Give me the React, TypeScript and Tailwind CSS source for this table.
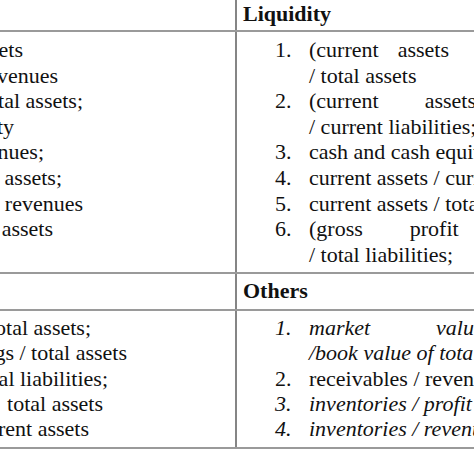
import React from 'react';

type ItemProps = {
  num: string;
  italicNum?: boolean;
  children: React.ReactNode;
};

// one numbered entry of a ratio list
function Item({ num, italicNum, children }: ItemProps) {
  return (
    <div className="flex whitespace-nowrap">
      <span className={`w-[34px] shrink-0 ${italicNum ? 'italic' : ''}`}>{num}</span>
      <span className="flex whitespace-nowrap">{children}</span>
    </div>
  );
}

function Cont({ children, italic }: { children: React.ReactNode; italic?: boolean }) {
  return (
    <div className={`pl-[34px] whitespace-nowrap ${italic ? 'italic' : ''}`}>{children}</div>
  );
}

// left column lines are cut by the page edge, so each one is pinned by its right end
function Cut({ end, text }: { end: number; text: string }) {
  return (
    <div className="flex justify-end whitespace-nowrap" style={{ width: end }}>
      <span>{text}</span>
    </div>
  );
}

const leftTop = [
  { end: 23, text: '1. net profit / total assets' },
  { end: 58, text: '2. net profit / revenues' },
  { end: 83, text: '3. operating profit / total assets;' },
  { end: 14, text: '4. net profit / equity' },
  { end: 44, text: '5. gross profit / revenues;' },
  { end: 62, text: '6. retained earnings / total assets;' },
  { end: 83, text: '7. operating profit / revenues' },
  { end: 53, text: '8. EBITDA / total assets' },
];

const leftBottom = [
  { end: 91, text: '1. total liabilities / total assets;' },
  { end: 127, text: '2. retained earnings / total assets' },
  { end: 108, text: '3. equity / total liabilities;' },
  { end: 103, text: '4. working capital\u00a0\u00a0total assets' },
  { end: 89, text: '5. fixed assets / current assets' },
];

export default function App() {
  return (
    <div className="w-[474px] h-[474px] overflow-hidden bg-white text-[#111] [font-family:'Liberation_Serif','Times_New_Roman',serif] text-[22px] leading-[25.6px]">
      {/* header row */}
      <div className="flex h-[32px] border-b-2 border-[#9a9a9a]">
        <div className="w-[237px] shrink-0 border-r-2 border-[#858585]" />
        <div className="flex-1 pl-[6px] pt-[1px] font-bold whitespace-nowrap">Liquidity</div>
      </div>

      {/* liquidity ratios */}
      <div className="flex h-[242px] border-b-2 border-[#9a9a9a]">
        <div className="w-[237px] shrink-0 border-r-2 border-[#858585] pt-[5px] overflow-hidden">
          {leftTop.map((l) => (
            <Cut key={l.text} end={l.end} text={l.text} />
          ))}
        </div>
        <div className="flex-1 pl-[38px] pt-[5px] overflow-hidden">
          <Item num="1.">
            <span>(current</span>
            <span className="ml-[19px]">assets</span>
            <span className="ml-[26px]">– inventories)</span>
          </Item>
          <Cont>/ total assets</Cont>
          <Item num="2.">
            <span>(current</span>
            <span className="ml-[46px]">assets</span>
            <span className="ml-[26px]">– inventories)</span>
          </Item>
          <Cont>/ current liabilities;</Cont>
          <Item num="3.">cash and cash equivalents / current liabilities</Item>
          <Item num="4.">current assets / current liabilities</Item>
          <Item num="5.">current assets / total liabilities</Item>
          <Item num="6.">
            <span>(gross</span>
            <span className="ml-[47px]">profit</span>
            <span className="ml-[30px]">+ depreciation)</span>
          </Item>
          <Cont>/ total liabilities;</Cont>
        </div>
      </div>

      {/* others header row */}
      <div className="flex h-[37px] border-b-2 border-[#9a9a9a]">
        <div className="w-[237px] shrink-0 border-r-2 border-[#858585]" />
        <div className="flex-1 pl-[6px] pt-[4px] font-bold whitespace-nowrap">Others</div>
      </div>

      {/* other ratios */}
      <div className="flex h-[138px] border-b-2 border-[#9a9a9a] leading-[25.3px]">
        <div className="w-[237px] shrink-0 border-r-2 border-[#858585] pt-[4px] overflow-hidden">
          {leftBottom.map((l) => (
            <Cut key={l.text} end={l.end} text={l.text} />
          ))}
        </div>
        <div className="flex-1 pl-[38px] pt-[4px] overflow-hidden">
          <Item num="1." italicNum>
            <span className="italic">market</span>
            <span className="italic ml-[66px]">value</span>
            <span className="italic ml-[30px]">of equity</span>
          </Item>
          <Cont italic>/book value of total debt</Cont>
          <Item num="2.">receivables / revenues</Item>
          <Item num="3." italicNum>
            <span className="italic">inventories / profit</span>
          </Item>
          <Item num="4." italicNum>
            <span className="italic">inventories / revenues</span>
          </Item>
        </div>
      </div>
    </div>
  );
}
